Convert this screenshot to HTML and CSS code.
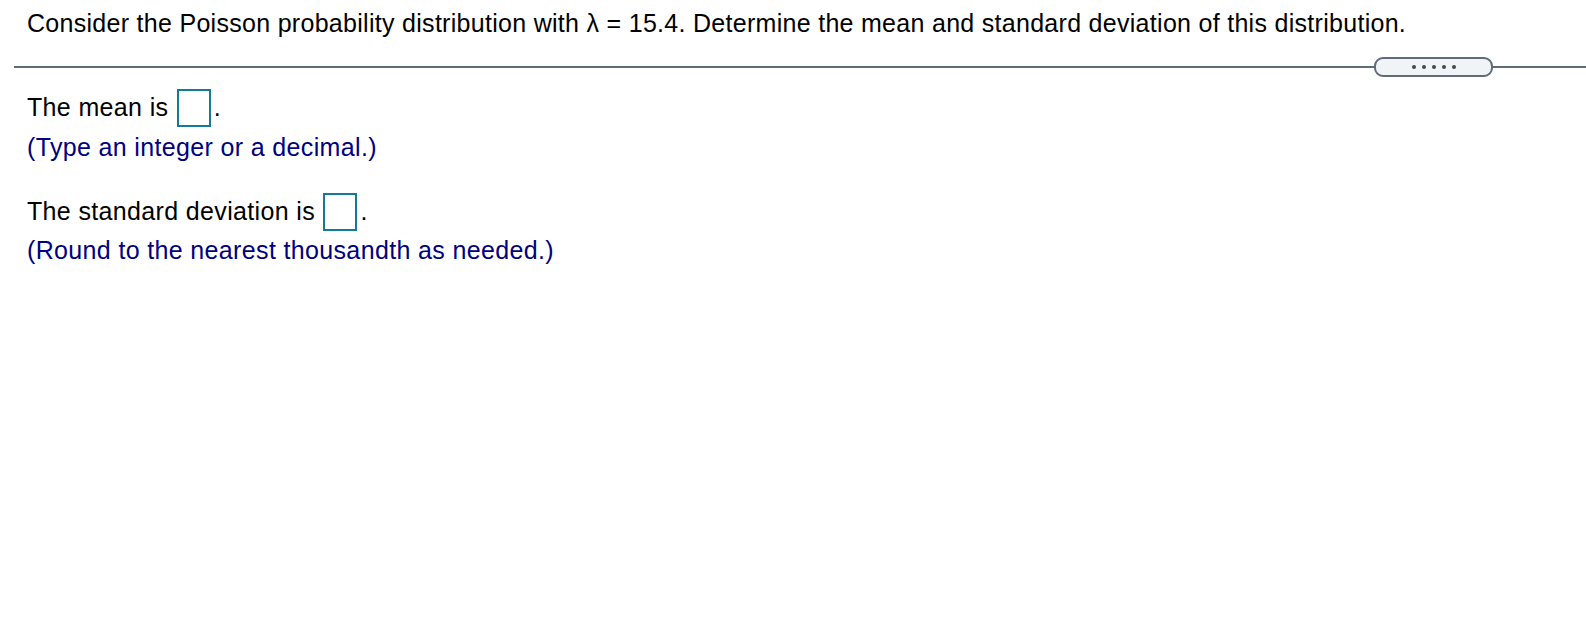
FILE: index.html
```html
<!DOCTYPE html>
<html>
<head>
<meta charset="utf-8">
<link rel="stylesheet" href="styles.css">
</head>
<body>
<div class="page">
  <div class="question">Consider the Poisson probability distribution with <span class="lambda">&lambda;</span> = 15.4. Determine the mean and standard deviation of this distribution.</div>
  <div class="divider">
    <div class="rule"></div>
    <button class="more"><span class="dot"></span><span class="dot"></span><span class="dot"></span><span class="dot"></span><span class="dot"></span></button>
    <div class="rule rule-end"></div>
  </div>
  <div class="answer">
    <div class="line">The mean is <span class="box"></span>.</div>
    <div class="hint">(Type an integer or a decimal.)</div>
  </div>
  <div class="answer">
    <div class="line">The standard deviation is <span class="box"></span>.</div>
    <div class="hint">(Round to the nearest thousandth as needed.)</div>
  </div>
</div>
</body>
</html>
```
FILE: styles.css
```css
html, body {
  margin: 0;
  padding: 0;
  background: #ffffff;
}
.page {
  font-family: "Liberation Sans", Arial, sans-serif;
  font-size: 25px;
  letter-spacing: 0.35px;
  color: #000000;
  padding-top: 5px;
}
.question {
  padding-left: 27px;
  line-height: 36px;
  letter-spacing: 0.29px;
}
.divider {
  display: flex;
  align-items: center;
  margin-top: 16px;
  padding-left: 14px;
  height: 20px;
}
.rule {
  flex: 1;
  height: 2px;
  background: #5e6b78;
}
.rule-end {
  flex: 0 0 93px;
}
.more {
  box-sizing: border-box;
  width: 119px;
  height: 20px;
  border: 2px solid #5e6b78;
  border-radius: 9px;
  background: #f1f4f6;
  display: flex;
  align-items: center;
  justify-content: center;
  gap: 6px;
  padding: 0;
  margin: 0;
}
.dot {
  width: 4px;
  height: 4px;
  border-radius: 50%;
  background: #43484e;
}
.answer {
  padding-left: 27px;
}
.answer + .answer {
  margin-top: 24px;
}
.line {
  line-height: 41px;
  margin-top: 10px;
}
.answer + .answer .line {
  margin-top: 0;
}
.hint {
  color: #000080;
  line-height: 39px;
}
.answer + .answer .hint {
  line-height: 36px;
}
.box {
  display: inline-block;
  box-sizing: border-box;
  width: 34px;
  height: 38px;
  border: 2px solid #137a98;
  vertical-align: -11px;
  margin-left: 1px;
  margin-right: 3px;
}
```
